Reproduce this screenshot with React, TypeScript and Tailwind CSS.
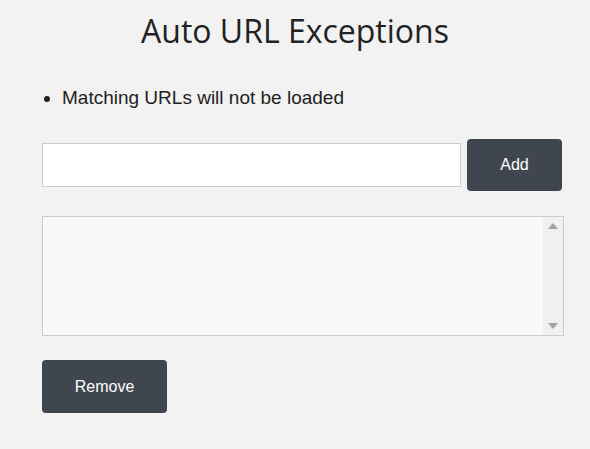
export default function App() {
  return (
    <div className="min-h-screen w-full bg-[#f2f2f2] font-['Liberation_Sans',Arial,sans-serif] text-[#222]">
      {/* TITLE */}
      <h1 className="pt-[9px] text-center font-['Open_Sans',sans-serif] text-[32px] leading-[44px] text-[#222]">
        Auto URL Exceptions
      </h1>

      <div className="pl-[42px] pr-[26px]">
        {/* NOTE */}
        <ul className="mt-[33px] list-disc pl-[20px] text-[19px] leading-[24px]">
          <li>Matching URLs will not be loaded</li>
        </ul>

        {/* ADD ROW */}
        <div className="mt-[29px] flex items-center gap-[6px]">
          <input
            type="text"
            className="h-[44px] w-[419px] border border-[#cccccc] bg-white px-2 text-[16px] outline-none"
          />
          <button className="h-[52px] w-[95px] rounded-[4px] bg-[#3f4650] text-[16px] text-white">
            Add
          </button>
        </div>

        {/* LIST */}
        <div className="mt-[25px] flex h-[120px] w-[522px] border border-[#cccccc] bg-[#f9f9f9]">
          <div className="flex-1" />
          <div className="flex w-[20px] flex-col items-center justify-between bg-[#f0f0f0] py-[6px]">
            <svg width="10" height="6" viewBox="0 0 10 6">
              <path d="M0 6 L5 0 L10 6 Z" fill="#a3a3a3" />
            </svg>
            <svg width="10" height="6" viewBox="0 0 10 6">
              <path d="M0 0 L10 0 L5 6 Z" fill="#a3a3a3" />
            </svg>
          </div>
        </div>

        {/* REMOVE */}
        <button className="mt-[24px] h-[53px] w-[125px] rounded-[4px] bg-[#3f4650] text-[16px] text-white">
          Remove
        </button>
      </div>
    </div>
  );
}
